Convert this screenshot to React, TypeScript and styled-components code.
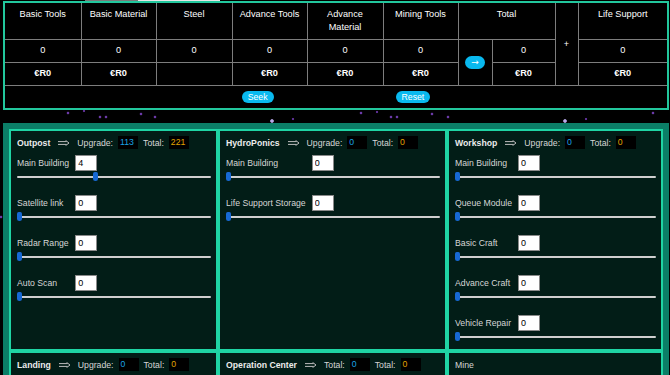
import React from 'react';
import styled, { createGlobalStyle } from 'styled-components';

const STARS: [number, number, number, string][] = [
  [68, 113, 0.9, '#6b3aa8'],
  [84, 111, 0.8, '#5b2f90'],
  [100, 117, 0.9, '#6b3aa8'],
  [106, 117, 0.9, '#6b3aa8'],
  [141, 114, 0.9, '#6b3aa8'],
  [155, 117, 0.9, '#6b3aa8'],
  [272, 121, 1.4, '#b9a8e8'],
  [293, 119, 0.8, '#5b2f90'],
  [361, 113, 0.9, '#6b3aa8'],
  [377, 112, 0.8, '#5b2f90'],
  [391, 117, 0.9, '#6b3aa8'],
  [397, 117, 0.9, '#6b3aa8'],
  [432, 114, 0.9, '#6b3aa8'],
  [448, 117, 0.9, '#6b3aa8'],
  [565, 121, 1.4, '#b9a8e8'],
  [586, 119, 0.8, '#5b2f90'],
  [653, 113, 0.9, '#6b3aa8'],
  [1, 217, 0.9, '#6b3aa8'],
];

const starBg = STARS.map(
  ([x, y, r, c]) => `radial-gradient(circle at ${x}px ${y}px, ${c} ${r}px, transparent ${r + 0.8}px)`
).join(', ');

const GlobalStyle = createGlobalStyle`
  html, body {
    margin: 0;
    padding: 0;
    background: #000;
    overflow: hidden;
  }
  body {
    font-family: "Liberation Sans", Arial, sans-serif;
  }
  * { box-sizing: border-box; }
`;

const Page = styled.div`
  padding: 0 1px 0 3px;
  min-height: 375px;
  background-color: #000;
  background-image: ${starBg};
  background-repeat: no-repeat;
`;

const TopEdge = styled.div`
  display: flex;
  height: 1px;
  padding-left: 82px;
`;

const EdgeSeg = styled.div<{ $w: number; $c: string }>`
  width: ${(p) => p.$w}px;
  background: ${(p) => p.$c};
`;

const HeaderBox = styled.div`
  border: 2px solid #22c79d;
  background: #000;
`;

const Table = styled.table`
  width: 100%;
  border-collapse: collapse;
  border-style: hidden;
  table-layout: fixed;
  color: #fff;
  font-size: 9.2px;
`;

const HeadRow = styled.tr`
  height: 36px;
`;

const BodyRow = styled.tr`
  height: 23px;
`;

const Th = styled.th`
  border: 1px solid #7d7d7d;
  font-weight: normal;
  vertical-align: top;
  text-align: center;
  padding: 5px 4px 0;
  line-height: 13px;
`;

const PlusCell = styled.th`
  border: 1px solid #7d7d7d;
  font-weight: normal;
  vertical-align: middle;
  text-align: center;
  padding: 0;
  font-size: 9px;
`;

const Td = styled.td<{ $strong?: boolean }>`
  border: 1px solid #7d7d7d;
  text-align: center;
  vertical-align: middle;
  padding: 0 2px;
  line-height: 13px;
  font-weight: ${(p) => (p.$strong ? 'bold' : 'normal')};
`;

const ButtonCell = styled.td`
  border: 1px solid #7d7d7d;
  border-left: none;
  border-right: none;
  border-bottom: none;
  padding: 0;
`;

const ButtonRow = styled.div`
  display: flex;
  justify-content: center;
  align-items: center;
  gap: 122px;
`;

const Pill = styled.button`
  height: 12px;
  border: none;
  border-radius: 7px;
  background: #09b9ef;
  color: #fff;
  font-family: "Liberation Sans", Arial, sans-serif;
  font-size: 8.7px;
  line-height: 12px;
  padding: 0 6px;
  cursor: pointer;
`;

const ArrowPill = styled(Pill)`
  width: 20px;
  height: 13px;
  padding: 0;
  font-size: 9px;
  line-height: 13px;
  font-family: "DejaVu Sans", sans-serif;
`;

const Frame = styled.div`
  margin-top: 13px;
  background: #0b7e67;
  padding: 6px;
`;

const PanelGrid = styled.div`
  display: grid;
  grid-template-columns: 209px 229px 1fr;
`;

const Panel = styled.section`
  border: 2px solid #1fd4a4;
  background: #021d17;
  padding: 5px 5px 8px 6px;
  color: #d6d6d6;
  font-size: 8.7px;
`;

const TitleRow = styled.div`
  display: flex;
  align-items: center;
  height: 13px;
  margin-bottom: 6px;
  white-space: nowrap;
`;

const Name = styled.span<{ $plain?: boolean }>`
  font-weight: ${(p) => (p.$plain ? 'normal' : 'bold')};
  color: ${(p) => (p.$plain ? '#d6d6d6' : '#ececec')};
  margin-right: 8px;
`;

const ArrowIcon = styled.svg`
  width: 11px;
  height: 6px;
  margin-right: 8px;
  flex: none;
`;

const Key = styled.span`
  margin-right: 5px;
`;

const ValueBox = styled.span<{ $color: string }>`
  display: inline-block;
  width: 20px;
  height: 13px;
  line-height: 13px;
  padding-left: 2px;
  background: #000;
  color: ${(p) => p.$color};
  margin-right: 5px;
`;

const Items = styled.div`
  display: grid;
  grid-template-columns: max-content 1fr;
  column-gap: 6px;
  align-items: center;
`;

const Label = styled.span`
  color: #d6d6d6;
  white-space: nowrap;
`;

const NumInput = styled.input`
  justify-self: start;
  width: 22px;
  height: 16px;
  margin: 0;
  border: 1px solid #8a8a8a;
  background: #fff;
  color: #000;
  font-family: "Liberation Sans", Arial, sans-serif;
  font-size: 9px;
  padding: 0 2px;
`;

const Slider = styled.input`
  grid-column: 1 / -1;
  -webkit-appearance: none;
  appearance: none;
  display: block;
  width: 100%;
  height: 9px;
  margin: 1px 0 14px;
  background: transparent;
  &:last-child {
    margin-bottom: 0;
  }
  &::-webkit-slider-runnable-track {
    height: 2px;
    background: #cfcfcf;
    border-radius: 1px;
  }
  &::-webkit-slider-thumb {
    -webkit-appearance: none;
    appearance: none;
    width: 5px;
    height: 9px;
    margin-top: -3.5px;
    border-radius: 2px 2px 3px 3px;
    background: #1769d4;
  }
`;

type Item = { label: string; value: number };
type Block = {
  name: string;
  plain?: boolean;
  keys?: [string, number, string][];
  items: Item[];
};

const CYAN = '#19a3e6';
const GOLD = '#e2a400';

const BLOCKS: Block[] = [
  {
    name: 'Outpost',
    keys: [
      ['Upgrade:', 113, CYAN],
      ['Total:', 221, GOLD],
    ],
    items: [
      { label: 'Main Building', value: 4 },
      { label: 'Satellite link', value: 0 },
      { label: 'Radar Range', value: 0 },
      { label: 'Auto Scan', value: 0 },
    ],
  },
  {
    name: 'HydroPonics',
    keys: [
      ['Upgrade:', 0, CYAN],
      ['Total:', 0, GOLD],
    ],
    items: [
      { label: 'Main Building', value: 0 },
      { label: 'Life Support Storage', value: 0 },
    ],
  },
  {
    name: 'Workshop',
    keys: [
      ['Upgrade:', 0, CYAN],
      ['Total:', 0, GOLD],
    ],
    items: [
      { label: 'Main Building', value: 0 },
      { label: 'Queue Module', value: 0 },
      { label: 'Basic Craft', value: 0 },
      { label: 'Advance Craft', value: 0 },
      { label: 'Vehicle Repair', value: 0 },
    ],
  },
  {
    name: 'Landing',
    keys: [
      ['Upgrade:', 0, CYAN],
      ['Total:', 0, GOLD],
    ],
    items: [],
  },
  {
    name: 'Operation Center',
    keys: [
      ['Total:', 0, CYAN],
      ['Total:', 0, GOLD],
    ],
    items: [],
  },
  {
    name: 'Mine',
    plain: true,
    items: [],
  },
];

const COLS = [76, 75, 76, 75, 76, 75, 34, 63, 23, 89];
const RES = ['Basic Tools', 'Basic Material', 'Steel', 'Advance Tools', 'Advance Material', 'Mining Tools'];

function PanelView({ block }: { block: Block }) {
  return (
    <Panel>
      <TitleRow>
        <Name $plain={block.plain}>{block.name}</Name>
        {block.keys && (
          <>
            <ArrowIcon viewBox="0 0 11 6" aria-hidden="true">
              <path d="M0 1.6H8.6M0 4.4H8.6" stroke="#bdbdbd" strokeWidth="1" fill="none" />
              <path d="M7.6 0.4L11 3L7.6 5.6" stroke="#bdbdbd" strokeWidth="1" fill="none" />
            </ArrowIcon>
            {block.keys.map(([k, v, c], i) => (
              <React.Fragment key={i}>
                <Key>{k}</Key>
                <ValueBox $color={c}>{v}</ValueBox>
              </React.Fragment>
            ))}
          </>
        )}
      </TitleRow>
      {block.items.length > 0 && (
        <Items>
          {block.items.map((it) => (
            <React.Fragment key={it.label}>
              <Label>{it.label}</Label>
              <NumInput type="text" defaultValue={String(it.value)} />
              <Slider type="range" min={0} max={10} defaultValue={it.value} />
            </React.Fragment>
          ))}
        </Items>
      )}
    </Panel>
  );
}

export default function App() {
  return (
    <>
      <GlobalStyle />
      <Page>
        <TopEdge>
          <EdgeSeg $w={53} $c="#7a7a7a" />
          <EdgeSeg $w={82} $c="#e8e8e8" />
        </TopEdge>
        <HeaderBox>
          <Table>
            <colgroup>
              {COLS.map((w, i) => (
                <col key={i} style={{ width: w }} />
              ))}
            </colgroup>
            <tbody>
              <HeadRow>
                {RES.map((r) => (
                  <Th key={r}>{r}</Th>
                ))}
                <Th colSpan={2}>Total</Th>
                <PlusCell rowSpan={3}>+</PlusCell>
                <Th>Life Support</Th>
              </HeadRow>
              <BodyRow>
                {RES.map((r) => (
                  <Td key={r}>0</Td>
                ))}
                <Td rowSpan={2}>
                  <ArrowPill>→</ArrowPill>
                </Td>
                <Td>0</Td>
                <Td>0</Td>
              </BodyRow>
              <BodyRow>
                {RES.map((r) => (
                  <Td key={r} $strong>
                    {r === 'Steel' ? '' : '€R0'}
                  </Td>
                ))}
                <Td $strong>€R0</Td>
                <Td $strong>€R0</Td>
              </BodyRow>
              <BodyRow>
                <ButtonCell colSpan={10}>
                  <ButtonRow>
                    <Pill>Seek</Pill>
                    <Pill>Reset</Pill>
                  </ButtonRow>
                </ButtonCell>
              </BodyRow>
            </tbody>
          </Table>
        </HeaderBox>
        <Frame>
          <PanelGrid>
            {BLOCKS.map((b) => (
              <PanelView key={b.name} block={b} />
            ))}
          </PanelGrid>
        </Frame>
      </Page>
    </>
  );
}
